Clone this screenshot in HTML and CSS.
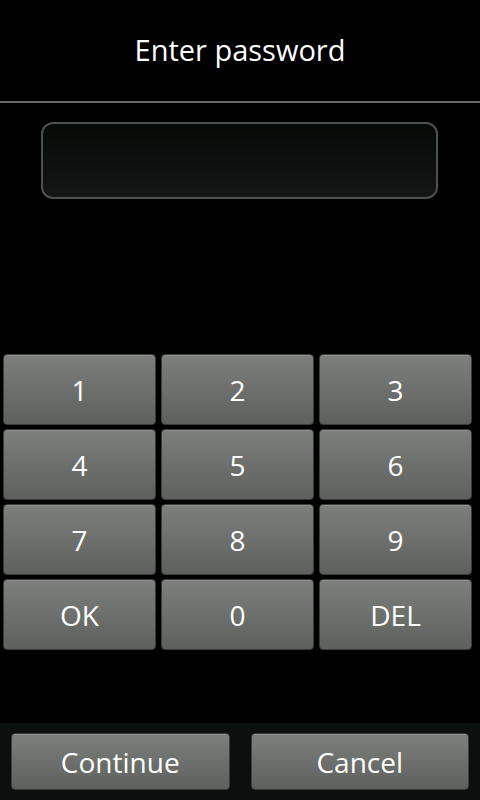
FILE: index.html
```html
<!DOCTYPE html>
<html lang="en">
<head>
    <meta charset="UTF-8">
    <meta name="viewport" content="width=device-width, initial-scale=1.0">
    <title>Enter password</title>
    <link rel="stylesheet" href="styles.css">
</head>
<body>
    <div class="screen">
        <div class="title">Enter password</div>
        <div class="field-wrap">
            <div class="password-field"></div>
        </div>

        <div class="keypad">
            <button class="key">1</button>
            <button class="key">2</button>
            <button class="key">3</button>
            <button class="key">4</button>
            <button class="key">5</button>
            <button class="key">6</button>
            <button class="key">7</button>
            <button class="key">8</button>
            <button class="key">9</button>
            <button class="key">OK</button>
            <button class="key">0</button>
            <button class="key">DEL</button>
        </div>

        <div class="bottom-bar">
            <button class="bar-btn">Continue</button>
            <button class="bar-btn">Cancel</button>
        </div>
    </div>
</body>
</html>
```

FILE: styles.css
```css
body {
    margin: 0;
    background: #000;
    font-family: "Open Sans", "DejaVu Sans", sans-serif;
    color: #fff;
}
.screen {
    width: 480px;
    height: 800px;
    display: flex;
    flex-direction: column;
    overflow: hidden;
}
.title {
    height: 103px;
    box-sizing: border-box;
    padding-top: 28px;
    line-height: 44px;
    text-align: center;
    font-size: 29px;
    border-bottom: 2px solid #6a6a6a;
}
.field-wrap {
    padding: 19px 42px 0 41px;
}
.password-field {
    height: 73px;
    border: 2px solid #4f5150;
    border-radius: 12px;
    background: linear-gradient(#050a07, #141615);
}
.keypad {
    margin-top: 155px;
    padding-left: 3px;
    width: 469px;
    display: grid;
    grid-template-columns: repeat(3, 153px);
    grid-auto-rows: 71px;
    column-gap: 5px;
    row-gap: 4px;
}
.key, .bar-btn {
    font-family: "Open Sans", "DejaVu Sans", sans-serif;
    font-size: 28px;
    color: #fff;
    border: 1px solid #3a3c3a;
    border-radius: 4px;
    background: linear-gradient(#7c7f7b, #5d605c);
    box-shadow: inset 0 1px 0 #8e918d;
    padding: 0;
    cursor: pointer;
}
.bottom-bar {
    margin-top: auto;
    height: 77px;
    box-sizing: border-box;
    background: #0b0f0d;
    display: flex;
    gap: 21px;
    padding: 10px 11px;
}
.bar-btn {
    width: 219px;
    height: 57px;
}
```
